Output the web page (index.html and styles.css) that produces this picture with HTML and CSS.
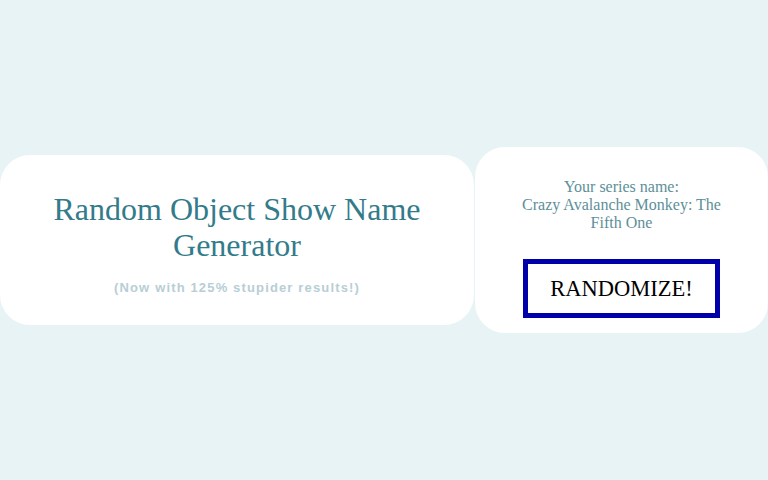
FILE: index.html
```html
<!DOCTYPE html>
<html lang="en">

<head>
    <meta charset="UTF-8">
    <meta name="viewport" content="width=device-width, initial-scale=1.0">
    <link rel="stylesheet" href="styles.css">
    <title>Random Object Show Name Generator</title>
</head>

<body>
    <div class="wrap">
        <div class="card header">
            <h1 class="title">Random Object Show Name Generator</h1>
            <p class="subtitle">(Now with 125% stupider results!)</p>
        </div>
        <div class="card result">
            <p class="series">Your series name:<br>Crazy Avalanche Monkey: The Fifth One</p>
            <button class="randomize" id="go">RANDOMIZE!</button>
        </div>
    </div>
</body>

</html>
```

FILE: styles.css
```css
html,
body {
    margin: 0;
    height: 100%;
}

body {
    background-color: #e7f3f5;
    font-family: "Liberation Serif", serif;
}

.wrap {
    display: flex;
    align-items: center;
    gap: 1px;
    height: 100%;
}

.card {
    background-color: #fff;
    border-radius: 30px;
    text-align: center;
    box-sizing: border-box;
}

.header {
    flex: 0 0 474px;
    padding: 36px 40px 30px;
}

.title {
    margin: 0;
    font-size: 32px;
    font-weight: normal;
    line-height: 36px;
    color: #337b8b;
}

.subtitle {
    margin: 17px 0 0;
    font-family: "Liberation Sans", sans-serif;
    font-size: 13px;
    font-weight: bold;
    line-height: 15px;
    letter-spacing: 1.15px;
    color: #b7ced6;
}

.result {
    flex: 0 0 293px;
    padding: 31px 46px 15px;
}

.series {
    margin: 0;
    font-size: 16px;
    line-height: 18px;
    color: #5d8f99;
}

.randomize {
    margin-top: 27px;
    width: 197px;
    height: 59px;
    border: 5px solid #0000aa;
    background-color: #fff;
    font-family: "Liberation Serif", serif;
    font-size: 22.5px;
    color: #000;
    cursor: pointer;
}
```
